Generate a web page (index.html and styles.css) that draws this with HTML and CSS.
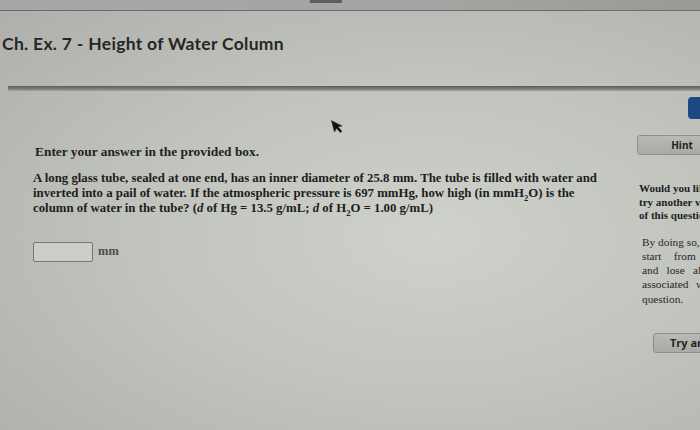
FILE: index.html
```html
<!DOCTYPE html>
<html>
<head>
<meta charset="utf-8">
<link rel="stylesheet" href="styles.css">
</head>
<body>
<div class="screen">
  <div class="topbar"><span class="tab"></span></div>
  <h1 class="title">Ch. Ex. 7 - Height of Water Column</h1>
  <div class="rule"></div>
  <div class="toolrow"><span class="bluebtn"></span></div>
  <div class="main">
    <div class="question">
      <p class="instr">Enter your answer in the provided box.</p>
      <p class="prompt">A long glass tube, sealed at one end, has an inner diameter of 25.8 mm. The tube is filled with water and<br>inverted into a pail of water. If the atmospheric pressure is 697 mmHg, how high (in mmH<sub>2</sub>O) is the<br>column of water in the tube? (<i>d</i> of Hg = 13.5 g/mL; <i>d</i> of H<sub>2</sub>O = 1.00 g/mL)</p>
      <div class="answer"><span class="box"></span><span class="unit">mm</span></div>
    </div>
    <div class="side">
      <div class="btn hint">Hint</div>
      <p class="ask">Would you like to try another version of this question?</p>
      <p class="note"><span class="ln">By doing so, you will</span><span class="ln">start from scratch</span><span class="ln">and lose all points</span><span class="ln">associated with this</span><span class="ln last">question.</span></p>
      <div class="btn try">Try another version</div>
    </div>
  </div>
  <svg class="cursor" width="12" height="16" viewBox="0 0 12 16"><path d="M1 1 L1 13 L4 10 L6.5 15 L8.5 14 L6 9 L10 9 Z" fill="#111" stroke="#444" stroke-width="0.6"/></svg>
</div>
</body>
</html>
```
FILE: styles.css
```css
html, body {
  margin: 0;
  padding: 0;
  width: 700px;
  height: 430px;
  overflow: hidden;
}
body {
  background: radial-gradient(ellipse at 62% 55%, #ced2ca 0%, #c2c4be 45%, #aeafaa 100%);
  font-family: "Liberation Serif", serif;
  color: #1e1e1e;
}
.screen {
  position: relative;
  width: 700px;
  height: 430px;
  overflow: hidden;
}
.topbar {
  height: 10px;
  background: linear-gradient(90deg, #a6a6a7, #a3a6a4 60%, #989a94);
  border-bottom: 1px solid #6a6c69;
  position: relative;
}
.tab {
  position: absolute;
  left: 310px;
  top: 0;
  width: 32px;
  height: 3px;
  background: #5d605d;
}
.title {
  margin: 23px 0 0 2px;
  font-family: "Lato", sans-serif;
  font-weight: 700;
  font-size: 17.5px;
  color: #262626;
  letter-spacing: 0.3px;
  line-height: 20px;
}
.rule {
  margin: 32px 0 0 8px;
  height: 5px;
  background: linear-gradient(180deg, #5e5f5b 0%, #777873 50%, #a3a49f 100%);
}
.toolrow {
  display: flex;
  justify-content: flex-end;
  margin-top: 6px;
  height: 22px;
}
.bluebtn {
  width: 12px;
  height: 22px;
  background: #1c4883;
  border-radius: 4px 0 0 4px;
}
.main {
  display: flex;
  margin-top: 16px;
}
.question {
  width: 604px;
  flex: none;
  padding-left: 33px;
  box-sizing: border-box;
}
.instr {
  margin: 10px 0 0 2px;
  font-weight: 700;
  font-size: 13.4px;
  line-height: 14px;
  color: #222;
}
.prompt {
  margin: 12px 0 0 0;
  font-weight: 700;
  font-size: 12.8px;
  line-height: 15px;
  color: #1d1d1d;
  white-space: nowrap;
}
.prompt sub {
  font-size: 8.5px;
  line-height: 0;
}
.answer {
  display: flex;
  align-items: center;
  margin-top: 26px;
}
.box {
  width: 58px;
  height: 18px;
  border: 1px solid #767874;
  border-radius: 2px;
  background: #cbcdc7;
}
.unit {
  margin-left: 5px;
  font-size: 12.5px;
  font-weight: 700;
  color: #4e4e4c;
  margin-top: -1px;
}
.side {
  width: 104px;
  margin-left: 33px;
  flex: none;
}
.btn {
  height: 20px;
  border: 1px solid #8e8f8a;
  border-radius: 3px;
  background: linear-gradient(180deg, #b9bab5, #a9aaa5);
  font-family: "Open Sans", sans-serif;
  font-weight: 700;
  font-size: 10px;
  line-height: 18px;
  color: #222;
  box-sizing: border-box;
  white-space: nowrap;
}
.hint {
  width: 90px;
  text-align: center;
}
.ask {
  margin: 27px 0 0 2px;
  font-weight: 700;
  font-size: 11px;
  line-height: 13.5px;
  width: 94px;
  color: #1d1d1d;
}
.note {
  margin: 12px 0 0 5px;
  font-size: 11.3px;
  line-height: 14.3px;
  width: 98px;
  color: #262626;
}
.ln {
  display: block;
  white-space: nowrap;
  text-align: justify;
  text-align-last: justify;
}
.ln.last {
  text-align-last: left;
}
.try {
  margin: 27px 0 0 16px;
  width: 100px;
  padding-left: 16px;
  font-size: 11px;
}
.cursor {
  position: absolute;
  left: 332px;
  top: 118px;
  transform: rotate(-15deg);
}
```
